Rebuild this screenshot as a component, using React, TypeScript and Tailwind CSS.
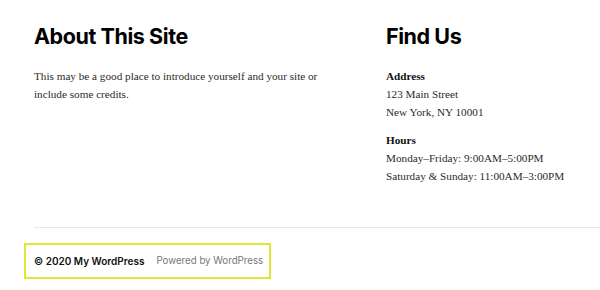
export default function App() {
  return (
    <div className="h-[290px] w-[600px] overflow-hidden bg-white">
      <div className="flex pl-[34px] pt-[21px]">
        <section className="w-[352px]">
          <h2 className="font-['Inter',sans-serif] text-[21.5px] font-bold leading-[30px] tracking-[-0.02em] text-black">
            About This Site
          </h2>
          <p className="mt-[16px] w-[300px] font-['Liberation_Serif',serif] text-[11.2px] leading-[18px] text-[#2b2b2b]">
            This may be a good place to introduce yourself and your site or include some credits.
          </p>
        </section>
        <section>
          <h2 className="font-['Inter',sans-serif] text-[21.5px] font-bold leading-[30px] tracking-[-0.02em] text-black">
            Find Us
          </h2>
          <div className="mt-[16px] font-['Liberation_Serif',serif] text-[11.2px] leading-[18px] text-[#2b2b2b]">
            <p className="font-bold text-[#111]">Address</p>
            <p>123 Main Street</p>
            <p>New York, NY 10001</p>
            <p className="mt-[10px] font-bold text-[#111]">Hours</p>
            <p>Monday–Friday: 9:00AM–5:00PM</p>
            <p>Saturday &amp; Sunday: 11:00AM–3:00PM</p>
          </div>
        </section>
      </div>
      <div className="ml-[34px] mt-[42px] h-px bg-[#e9e9e3]" />
      <footer className="ml-[24px] mt-[15px] flex h-[36px] w-fit items-center gap-[12px] whitespace-nowrap border-2 border-[#dfe635] pl-[8px] pr-[6px] font-['Inter',sans-serif] text-[10px]">
        <span className="font-semibold text-[#111]">© 2020 My WordPress</span>
        <span className="text-[9.7px] text-[#777]">Powered by WordPress</span>
      </footer>
    </div>
  );
}
